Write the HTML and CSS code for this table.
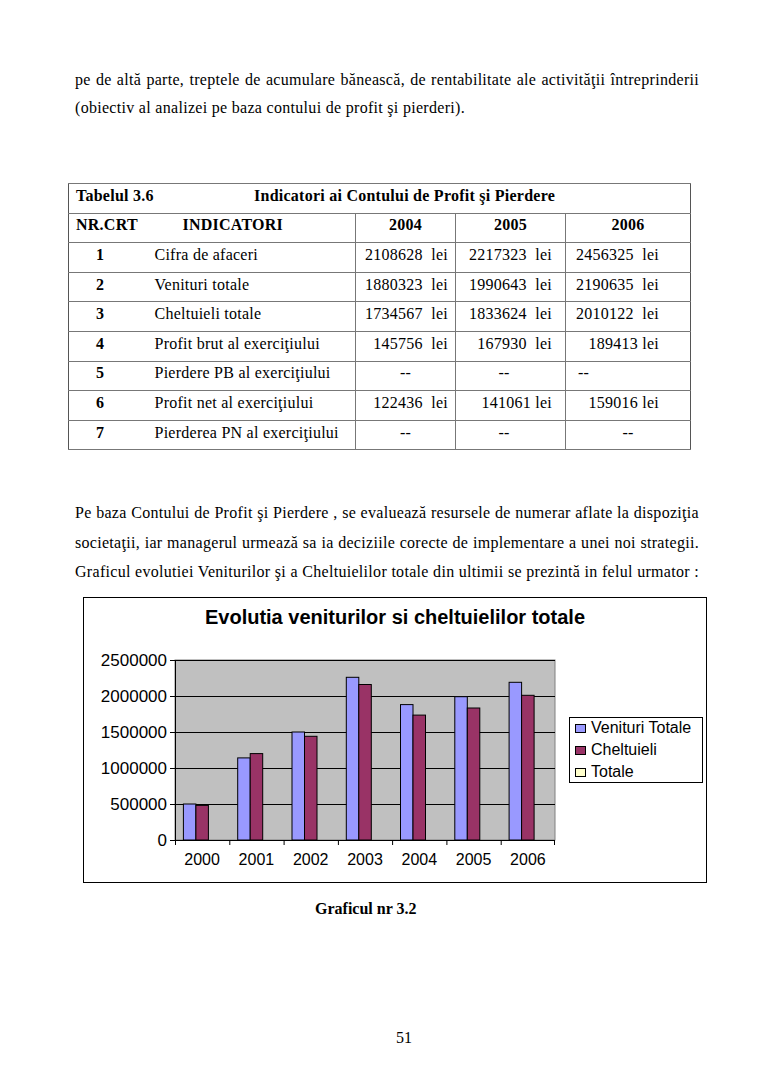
FILE: index.html
```html
<!DOCTYPE html>
<html lang="ro">
<head>
<meta charset="utf-8">
<title>Indicatori ai Contului de Profit şi Pierdere</title>
<link rel="stylesheet" href="styles.css">
</head>
<body>
<div class="page">
  <p class="text intro">
    <span class="line full">pe de altă parte, treptele de acumulare bănească, de rentabilitate ale activităţii întreprinderii</span>
    <span class="line">(obiectiv al analizei pe baza contului de profit şi pierderi).</span>
  </p>

  <table class="indicators">
    <colgroup>
      <col class="c-nr"><col class="c-name"><col class="c-y1"><col class="c-y2"><col class="c-y3">
    </colgroup>
    <tr class="caption-row">
      <td colspan="5"><span class="tab-no">Tabelul 3.6</span><span class="tab-title">Indicatori ai Contului de Profit şi Pierdere</span></td>
    </tr>
    <tr class="head">
      <td class="nr-h">NR.CRT</td>
      <td class="name-h">INDICATORI</td>
      <td class="yr y1">2004</td>
      <td class="yr y2">2005</td>
      <td class="yr y3">2006</td>
    </tr>
    <tr>
      <td class="nr">1</td><td class="name">Cifra de afaceri</td>
      <td class="val y1">2108628  lei</td><td class="val y2">2217323  lei</td><td class="val y3">2456325  lei</td>
    </tr>
    <tr>
      <td class="nr">2</td><td class="name">Venituri totale</td>
      <td class="val y1">1880323  lei</td><td class="val y2">1990643  lei</td><td class="val y3">2190635  lei</td>
    </tr>
    <tr>
      <td class="nr">3</td><td class="name">Cheltuieli totale</td>
      <td class="val y1">1734567  lei</td><td class="val y2">1833624  lei</td><td class="val y3">2010122  lei</td>
    </tr>
    <tr>
      <td class="nr">4</td><td class="name">Profit brut al exerciţiului</td>
      <td class="val y1">145756  lei</td><td class="val y2">167930  lei</td><td class="val y3">189413 lei</td>
    </tr>
    <tr>
      <td class="nr">5</td><td class="name">Pierdere PB al exerciţiului</td>
      <td class="dash y1">--</td><td class="dash y2">--</td><td class="dash-left">--</td>
    </tr>
    <tr>
      <td class="nr">6</td><td class="name">Profit net al exerciţiului</td>
      <td class="val y1">122436  lei</td><td class="val y2">141061 lei</td><td class="val y3">159016 lei</td>
    </tr>
    <tr>
      <td class="nr">7</td><td class="name">Pierderea PN al exerciţiului</td>
      <td class="dash y1">--</td><td class="dash y2">--</td><td class="dash y3c">--</td>
    </tr>
  </table>

  <p class="text body2">
    <span class="line full">Pe baza Contului de Profit şi Pierdere , se evaluează resursele de numerar aflate la dispoziţia</span>
    <span class="line full">societaţii, iar managerul urmează sa ia deciziile corecte de implementare a unei noi strategii.</span>
    <span class="line full">Graficul evolutiei Veniturilor şi a Cheltuielilor totale din ultimii se prezintă in felul urmator :</span>
  </p>

  <div class="chart">
    <svg class="chart-svg" width="622" height="284" viewBox="0 0 622 284">
      <text class="ch-title" x="311" y="26" text-anchor="middle">Evolutia veniturilor si cheltuielilor totale</text>

      <rect x="91" y="62" width="380" height="180" fill="#c0c0c0" stroke="#808080" stroke-width="1"/>
      <g stroke="#000" stroke-width="1">
        <line x1="91" y1="62.5" x2="471" y2="62.5"/>
        <line x1="91" y1="98.5" x2="471" y2="98.5"/>
        <line x1="91" y1="134.5" x2="471" y2="134.5"/>
        <line x1="91" y1="170.5" x2="471" y2="170.5"/>
        <line x1="91" y1="206.5" x2="471" y2="206.5"/>
      </g>

      <g stroke="#000" stroke-width="1">
        <rect x="99.4" y="206" width="12.5" height="36" fill="#9999ff"/>
        <rect x="111.9" y="207.4" width="12.5" height="34.6" fill="#993366"/>
        <rect x="153.7" y="159.9" width="12.5" height="82.1" fill="#9999ff"/>
        <rect x="166.2" y="155.6" width="12.5" height="86.4" fill="#993366"/>
        <rect x="208.0" y="134" width="12.5" height="108" fill="#9999ff"/>
        <rect x="220.5" y="138.3" width="12.5" height="103.7" fill="#993366"/>
        <rect x="262.3" y="79.3" width="12.5" height="162.7" fill="#9999ff"/>
        <rect x="274.8" y="86.5" width="12.5" height="155.5" fill="#993366"/>
        <rect x="316.5" y="106.6" width="12.5" height="135.4" fill="#9999ff"/>
        <rect x="329.0" y="117.1" width="12.5" height="124.9" fill="#993366"/>
        <rect x="370.8" y="98.7" width="12.5" height="143.3" fill="#9999ff"/>
        <rect x="383.3" y="110" width="12.5" height="132" fill="#993366"/>
        <rect x="425.1" y="84.3" width="12.5" height="157.7" fill="#9999ff"/>
        <rect x="437.6" y="97.3" width="12.5" height="144.7" fill="#993366"/>
      </g>

      <g stroke="#000" stroke-width="1">
        <line x1="91.5" y1="62" x2="91.5" y2="242"/>
        <line x1="91" y1="242.5" x2="471" y2="242.5"/>
        <line x1="86" y1="62.5" x2="91" y2="62.5"/>
        <line x1="86" y1="98.5" x2="91" y2="98.5"/>
        <line x1="86" y1="134.5" x2="91" y2="134.5"/>
        <line x1="86" y1="170.5" x2="91" y2="170.5"/>
        <line x1="86" y1="206.5" x2="91" y2="206.5"/>
        <line x1="86" y1="242.5" x2="91" y2="242.5"/>
        <line x1="91.5" y1="242" x2="91.5" y2="247"/>
        <line x1="145.8" y1="242" x2="145.8" y2="247"/>
        <line x1="200.1" y1="242" x2="200.1" y2="247"/>
        <line x1="254.4" y1="242" x2="254.4" y2="247"/>
        <line x1="308.6" y1="242" x2="308.6" y2="247"/>
        <line x1="362.9" y1="242" x2="362.9" y2="247"/>
        <line x1="417.2" y1="242" x2="417.2" y2="247"/>
        <line x1="470.5" y1="242" x2="470.5" y2="247"/>
      </g>

      <g class="ch-ylab" text-anchor="end">
        <text x="83" y="68">2500000</text>
        <text x="83" y="104">2000000</text>
        <text x="83" y="140">1500000</text>
        <text x="83" y="176">1000000</text>
        <text x="83" y="212">500000</text>
        <text x="83" y="248">0</text>
      </g>
      <g class="ch-xlab" text-anchor="middle">
        <text x="118.1" y="267">2000</text>
        <text x="172.4" y="267">2001</text>
        <text x="226.7" y="267">2002</text>
        <text x="281.0" y="267">2003</text>
        <text x="335.3" y="267">2004</text>
        <text x="389.6" y="267">2005</text>
        <text x="443.9" y="267">2006</text>
      </g>

      <rect x="485.5" y="119.5" width="133" height="65" fill="#fff" stroke="#000" stroke-width="1"/>
      <g stroke="#000" stroke-width="1">
        <rect x="491.5" y="126.5" width="10" height="8" fill="#9999ff"/>
        <rect x="491.5" y="148.5" width="10" height="8" fill="#993366"/>
        <rect x="491.5" y="170.5" width="10" height="8" fill="#ffffcc"/>
      </g>
      <g class="ch-leg">
        <text x="507" y="135">Venituri Totale</text>
        <text x="507" y="157">Cheltuieli</text>
        <text x="507" y="179">Totale</text>
      </g>
    </svg>
  </div>

  <p class="fig-caption">Graficul nr 3.2</p>

  <p class="page-no">51</p>
</div>
</body>
</html>
```

FILE: styles.css
```css
html, body {
  margin: 0;
  padding: 0;
  background: #fff;
}

body {
  font-family: "Liberation Serif", "Times New Roman", serif;
  font-size: 16px;
  color: #000;
}

.page {
  width: 768px;
  height: 1086px;
  overflow: hidden;
  padding-top: 66px;
  box-sizing: border-box;
}

.text {
  margin: 0 69px 0 75px;
  letter-spacing: 0.3px;
}

.line {
  display: block;
  text-align: left;
  white-space: nowrap;
}

.line.full {
  text-align: justify;
  text-align-last: justify;
}

.intro {
  line-height: 28px;
}

.body2 {
  margin-top: 48px;
  line-height: 29.3px;
}

/* Table */
.indicators {
  margin: 61px 0 0 68px;
  width: 622px;
  border-collapse: collapse;
  table-layout: fixed;
  border: 1px solid #555;
  letter-spacing: 0.25px;
}

.c-nr { width: 82px; }
.c-name { width: 205px; }
.c-y1 { width: 100px; }
.c-y2 { width: 110px; }
.c-y3 { width: 125px; }

.indicators tr {
  height: 29.6px;
}

.indicators td {
  padding: 0 0 5px 0;
  vertical-align: middle;
  line-height: 20px;
  border-top: 1px solid #777;
  border-bottom: 1px solid #777;
  white-space: pre;
}

.indicators td.y1,
.indicators td.y2,
.indicators td.y3,
.indicators td.y3c,
.indicators td.dash-left {
  border-left: 1px solid #777;
}

.caption-row td {
  font-weight: bold;
  padding-left: 7px;
}

.tab-no {
  display: inline-block;
  width: 178px;
}

.head td {
  font-weight: bold;
}

.nr-h {
  padding-left: 7px !important;
}

.name-h {
  padding-left: 32px !important;
}

.yr {
  text-align: center;
}

.nr {
  font-weight: bold;
  padding-left: 27px !important;
}

.name {
  padding-left: 4px !important;
}

.val {
  text-align: right;
}

.val.y1 { padding-right: 7px !important; }
.val.y2 { padding-right: 13px !important; }
.val.y3 { padding-right: 31px !important; }

.dash {
  text-align: center;
}

.dash.y2 {
  padding-right: 13px !important;
}

.dash-left {
  padding-left: 12px !important;
}

.y3c {
  text-align: center;
}

/* Chart */
.chart {
  margin: 11px 0 0 83px;
  width: 622px;
  height: 284px;
  border: 1px solid #000;
}

.chart-svg {
  display: block;
  font-family: "Liberation Sans", Arial, sans-serif;
}

.ch-title {
  font-size: 20px;
  font-weight: bold;
  fill: #000;
}

.ch-ylab text {
  font-size: 17px;
  fill: #000;
}

.ch-xlab text {
  font-size: 16px;
  fill: #000;
}

.ch-leg text {
  font-size: 16px;
  fill: #000;
}

.fig-caption {
  margin: 16px 0 0 315px;
  font-weight: bold;
  line-height: 20px;
}

.page-no {
  margin: 109px 0 0 396px;
  line-height: 20px;
}
```
